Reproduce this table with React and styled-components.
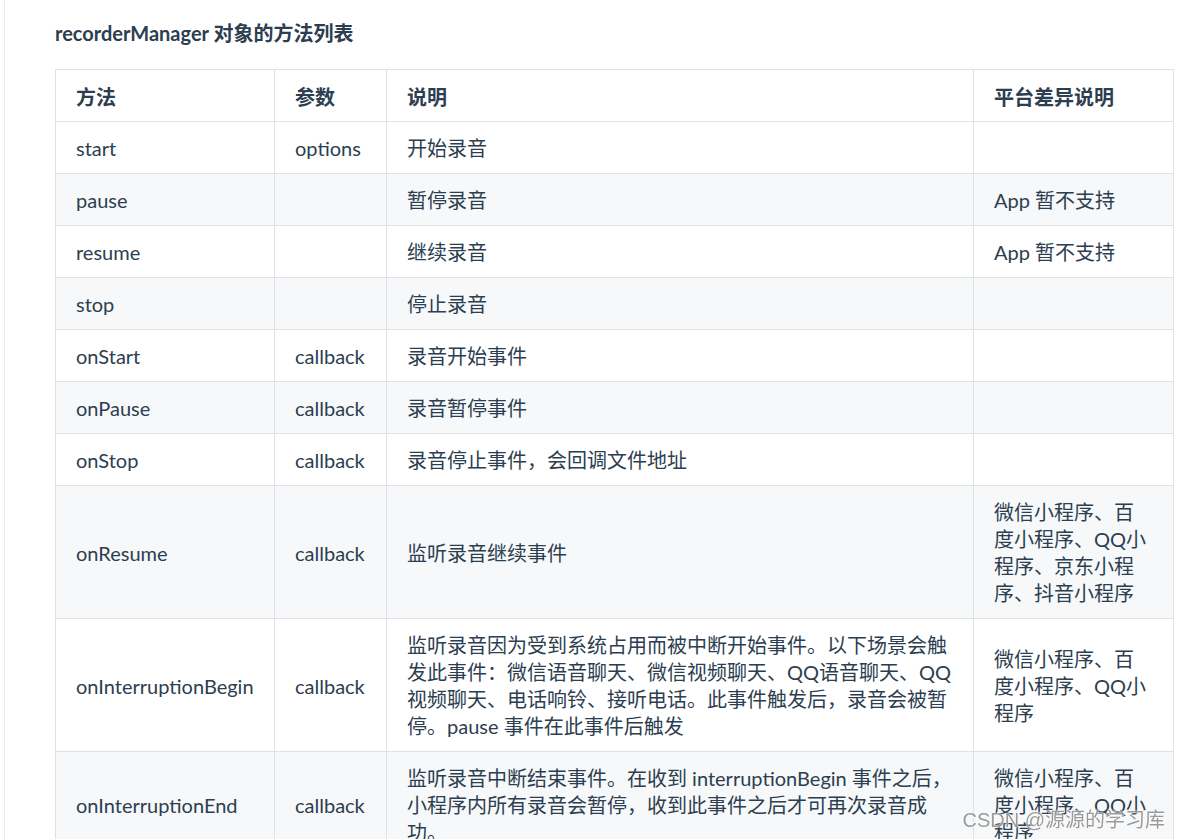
import React from "react";
import styled, { createGlobalStyle } from "styled-components";

const Global = createGlobalStyle`
  html, body { margin: 0; padding: 0; background: #fff; }
  body {
    font-family: Lato, "Noto Sans CJK SC", sans-serif;
    color: #2c3e50;
  }
`;

const Page = styled.div`
  margin-left: 4px;
  min-height: 839px;
  border-left: 1px solid #eaecef;
  padding: 20px 0 0 50px;
  box-sizing: border-box;
`;

const Title = styled.h3`
  margin: 0 0 22px;
  font-size: 20px;
  line-height: 27px;
  font-weight: 700;
  color: #2c3e50;
`;

const Table = styled.table`
  border-collapse: collapse;
  table-layout: fixed;
  width: 1119px;
  font-size: 20px;
  line-height: 27px;
`;

const Row = styled.tr`
  background: ${(p) => (p.$even ? "#f6f8fa" : "#fff")};
`;

const Th = styled.th`
  border: 1px solid #dfe2e5;
  padding: 14px 20px 10px;
  text-align: left;
  font-weight: 700;
  vertical-align: middle;
`;

const Td = styled.td`
  border: 1px solid #dfe2e5;
  padding: 13px 20px 11px;
  text-align: left;
  vertical-align: middle;
`;

const Watermark = styled.div`
  position: fixed;
  right: 15px;
  bottom: 5px;
  font-size: 20px;
  line-height: 27px;
  color: rgba(120, 120, 120, 0.75);
  text-shadow: 0 0 2px #fff, 0 0 1px #fff;
  font-family: "Liberation Sans", "Noto Sans CJK SC", sans-serif;
  pointer-events: none;
`;

const rows = [
  ["start", "options", "开始录音", ""],
  ["pause", "", "暂停录音", "App 暂不支持"],
  ["resume", "", "继续录音", "App 暂不支持"],
  ["stop", "", "停止录音", ""],
  ["onStart", "callback", "录音开始事件", ""],
  ["onPause", "callback", "录音暂停事件", ""],
  ["onStop", "callback", "录音停止事件，会回调文件地址", ""],
  ["onResume", "callback", "监听录音继续事件", "微信小程序、百度小程序、QQ小程序、京东小程序、抖音小程序"],
  [
    "onInterruptionBegin",
    "callback",
    "监听录音因为受到系统占用而被中断开始事件。以下场景会触发此事件：微信语音聊天、微信视频聊天、QQ语音聊天、QQ视频聊天、电话响铃、接听电话。此事件触发后，录音会被暂停。pause 事件在此事件后触发",
    "微信小程序、百度小程序、QQ小程序",
  ],
  [
    "onInterruptionEnd",
    "callback",
    "监听录音中断结束事件。在收到 interruptionBegin 事件之后，小程序内所有录音会暂停，收到此事件之后才可再次录音成功。",
    "微信小程序、百度小程序、QQ小程序",
  ],
];

export default function App() {
  return (
    <>
      <Global />
      <Page>
        <Title>recorderManager 对象的方法列表</Title>
        <Table>
          <colgroup>
            <col style={{ width: 219 }} />
            <col style={{ width: 112 }} />
            <col style={{ width: 587 }} />
            <col style={{ width: 200 }} />
          </colgroup>
          <thead>
            <Row>
              <Th>方法</Th>
              <Th>参数</Th>
              <Th>说明</Th>
              <Th>平台差异说明</Th>
            </Row>
          </thead>
          <tbody>
            {rows.map((r, i) => (
              <Row key={r[0]} $even={i % 2 === 1}>
                {r.map((c, j) => (
                  <Td key={j}>{c}</Td>
                ))}
              </Row>
            ))}
          </tbody>
        </Table>
      </Page>
      <Watermark>CSDN @源源的学习库</Watermark>
    </>
  );
}
